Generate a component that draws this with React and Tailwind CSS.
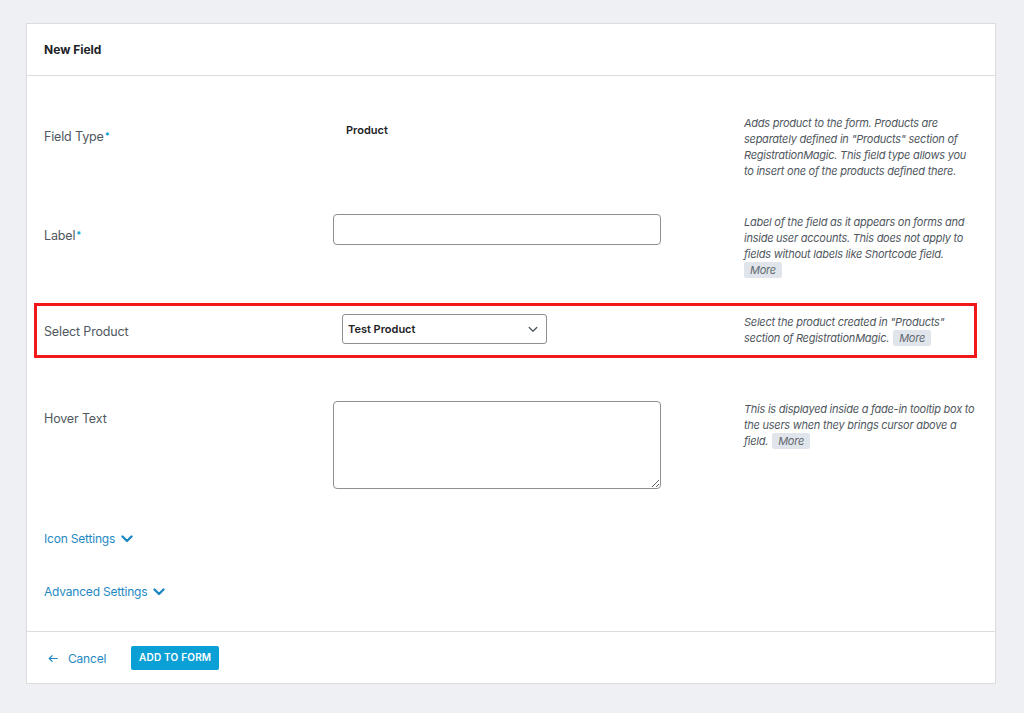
import React from "react";

const font = { fontFamily: "Inter, 'Liberation Sans', sans-serif" };

const More = () => (
  <span className="inline-block align-top bg-[#e0e5eb] text-[#646970] text-[11px] leading-[14px] px-[6px] py-[1px] rounded-[2px] ml-[4px]">
    More
  </span>
);

const Help = ({ children, className = "" }) => (
  <div
    className={`text-[11px] leading-[16px] italic text-[#50575e] tracking-[-0.25px] ${className}`}
  >
    {children}
  </div>
);

const Chevron = ({ className = "", width = 2.4 }) => (
  <svg
    viewBox="0 0 12 8"
    className={className}
    fill="none"
    stroke="currentColor"
    strokeWidth={width}
    strokeLinecap="round"
    strokeLinejoin="round"
  >
    <path d="M1.5 1.5 6 6l4.5-4.5" />
  </svg>
);

const Row = ({ label, star, labelTop, middle, help }) => (
  <div className="grid grid-cols-[289px_411px_1fr] items-start">
    <div
      className="text-[12.5px] leading-[16px] text-[#50575e] tracking-[-0.15px]"
      style={{ marginTop: labelTop }}
    >
      {label}
      {star && (
        <sup className="text-[#0a9fd5] text-[9px] font-bold ml-[1px] relative -top-[2px]">
          *
        </sup>
      )}
    </div>
    <div>{middle}</div>
    {help}
  </div>
);

export default function App() {
  return (
    <div className="min-h-[713px] bg-[#eef0f4] pt-[23px] px-[26px]" style={font}>
      <div className="bg-white border border-[#dcdcde] w-[970px]">
        <div className="h-[52px] border-b border-[#dcdcde] flex items-center px-[17px]">
          <h2 className="text-[12px] font-bold text-[#1d2327]">New Field</h2>
        </div>

        <div className="pl-[17px] pr-[18px] pt-[39px]">
          <Row
            label="Field Type"
            star
            labelTop={14}
            middle={
              <div className="ml-[13px] mt-[8px] text-[11px] leading-[14px] font-semibold text-[#1d2327]">
                Product
              </div>
            }
            help={
              <Help>
                Adds product to the form. Products are separately defined in
                "Products" section of RegistrationMagic. This field type allows
                you to insert one of the products defined there.
              </Help>
            }
          />

          <div className="mt-[35px]">
            <Row
              label="Label"
              star
              labelTop={14}
              middle={
                <input
                  type="text"
                  className="w-[328px] h-[31px] border border-[#8c8f94] rounded-[4px] bg-white"
                />
              }
              help={
                <Help>
                  Label of the field as it appears on forms and inside user
                  accounts. This does not apply to fields without labels like
                  Shortcode field.
                  <br />
                  <span className="-ml-[4px]">
                    <More />
                  </span>
                </Help>
              }
            />
          </div>

          <div className="mt-[25px] -ml-[10px] border-[3px] border-[#f01818] pl-[7px] pt-[8px] pb-[9px]">
            <Row
              label="Select Product"
              labelTop={10}
              middle={
                <div className="ml-[9px] w-[205px] h-[30px] border border-[#8c8f94] rounded-[3px] flex items-center justify-between pl-[5px] pr-[8px]">
                  <span className="text-[11px] font-semibold text-[#1d2327]">
                    Test Product
                  </span>
                  <Chevron width={1.6} className="w-[10px] h-[7px] text-[#50575e]" />
                </div>
              }
              help={
                <Help className="pr-[24px]">
                  Select the product created in "Products" section of
                  RegistrationMagic.
                  <More />
                </Help>
              }
            />
          </div>

          <div className="mt-[43px]">
            <Row
              label="Hover Text"
              labelTop={10}
              middle={
                <textarea className="block w-[328px] h-[88px] border border-[#8c8f94] rounded-[4px] bg-white resize-y" />
              }
              help={
                <Help className="-mr-[14px]">
                  This is displayed inside a fade-in tooltip box to
                  <br />
                  the users when they brings cursor above a
                  <br />
                  field.
                  <More />
                </Help>
              }
            />
          </div>

          <div className="mt-[42px] flex items-center gap-[6px] text-[12px] tracking-[-0.2px] text-[#1e88c2] h-[16px]">
            Icon Settings
            <Chevron className="w-[12px] h-[8px]" />
          </div>
          <div className="mt-[37px] flex items-center gap-[6px] text-[12px] tracking-[-0.2px] text-[#1e88c2] h-[16px]">
            Advanced Settings
            <Chevron className="w-[12px] h-[8px]" />
          </div>
          <div className="h-[31px]" />
        </div>

        <div className="border-t border-[#dcdcde] h-[52px] flex items-center px-[21px]">
          <div className="flex items-center text-[#1e88c2] text-[12px] tracking-[-0.2px] mt-[2px]">
            <svg viewBox="0 0 12 10" className="w-[10px] h-[9px]" fill="none" stroke="currentColor" strokeWidth="1.4" strokeLinecap="round" strokeLinejoin="round">
              <path d="M11 5H1.5M5 1.5 1.5 5 5 8.5" />
            </svg>
            <span className="ml-[10px]">Cancel</span>
          </div>
          <button className="ml-[25px] h-[24px] w-[88px] bg-[#0a9fd5] rounded-[2px] text-white text-[10px] font-semibold tracking-[0.2px]">
            ADD TO FORM
          </button>
        </div>
      </div>
    </div>
  );
}
